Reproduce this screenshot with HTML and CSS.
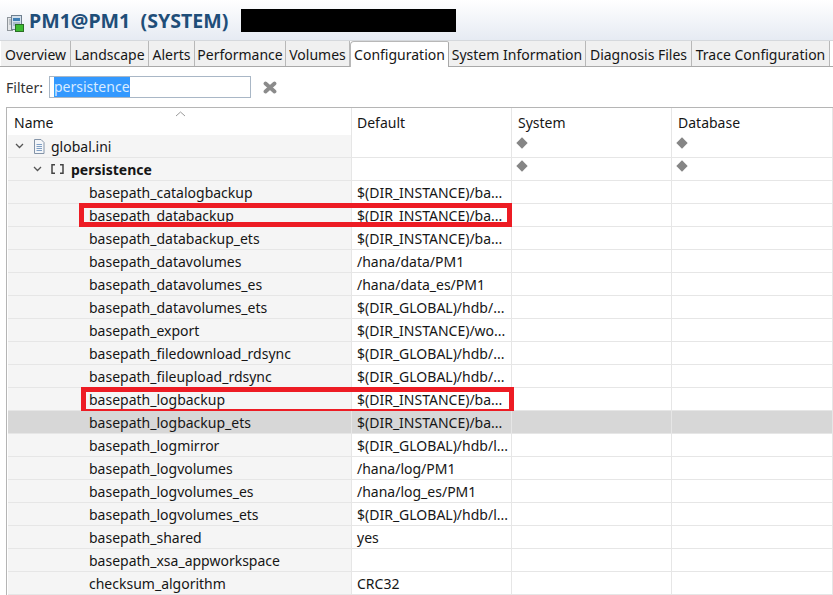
FILE: index.html
```html
<!DOCTYPE html>
<html lang="en">
<head>
<meta charset="utf-8">
<title>PM1@PM1 (SYSTEM)</title>
<link rel="stylesheet" href="styles.css">
</head>
<body>
<header class="title-bar">
  <svg class="sys-icon" width="17" height="17" viewBox="0 0 17 17">
    <rect x="0.500" y="2.500" width="5" height="13" fill="#e4e6e8" stroke="#8f959b"/>
    <path d="M2 5 H4 M2 7 H4 M2 9 H4" stroke="#9aa2aa"/>
    <rect x="4.500" y="0.500" width="10" height="14" fill="#d3e0ec" stroke="#6f7f8f"/>
    <rect x="6" y="3" width="7" height="3" fill="#3f7fb5"/>
    <path d="M6 8 H13 M6 10 H8" stroke="#7f97ad"/>
    <rect x="8.500" y="9.500" width="8" height="7" fill="#3dbb32" stroke="#2a6f25"/>
  </svg>
  <h1 class="title">PM1@PM1&nbsp; (SYSTEM)</h1>
  <div class="redaction"></div>
</header>
<nav class="tabs">
  <div class="tab t1">Overview</div>
  <div class="tab t2">Landscape</div>
  <div class="tab t3">Alerts</div>
  <div class="tab t4">Performance</div>
  <div class="tab t5">Volumes</div>
  <div class="tab active t6">Configuration</div>
  <div class="tab t7">System Information</div>
  <div class="tab t8">Diagnosis Files</div>
  <div class="tab t9">Trace Configuration</div>
</nav>
<div class="filter">
  <span class="filter-label">Filter:</span>
  <div class="filter-input"><span class="selected">persistence</span></div>
  <svg class="clear" width="14" height="13" viewBox="0 0 14 13">
    <path d="M2.500 2.500 L11.500 10.500 M11.500 2.500 L2.500 10.500" stroke="#8b8b8b" stroke-width="3.800" stroke-linecap="round"/>
  </svg>
</div>
<main class="table">
  <div class="row head">
    <div class="cell name">Name<svg class="sort" width="11" height="6" viewBox="0 0 11 6"><path d="M1 5 L5.500 1 L10 5" fill="none" stroke="#9a9a9a"/></svg></div>
    <div class="cell">Default</div>
    <div class="cell wide">System</div>
    <div class="cell wide">Database</div>
  </div>
  <div class="row">
    <div class="cell name lvl0">
      <svg class="chev" width="9" height="6" viewBox="0 0 9 6"><path d="M1 1 L4.500 4.500 L8 1" fill="none" stroke="#555" stroke-width="1.300"/></svg>
      <svg class="file" width="12" height="15" viewBox="0 0 12 15"><path d="M1.500 .5 H8 L11 3.500 V14.500 H1.500 Z" fill="#f4f6f9" stroke="#8494a8"/><path d="M3.500 5.500 H9 M3.500 7.500 H9 M3.500 9.500 H9 M3.500 11.500 H9" stroke="#7f9fc4"/></svg>
      global.ini
    </div>
    <div class="cell"></div>
    <div class="cell"><span class="diamond"></span></div>
    <div class="cell"><span class="diamond"></span></div>
  </div>
  <div class="row">
    <div class="cell name lvl1">
      <svg class="chev" width="9" height="6" viewBox="0 0 9 6"><path d="M1 1 L4.500 4.500 L8 1" fill="none" stroke="#555" stroke-width="1.300"/></svg>
      <svg class="brackets" width="13" height="10" viewBox="0 0 13 10"><path d="M4 .75 H1 V9.250 H4 M9 .75 H12 V9.250 H9" fill="none" stroke="#444" stroke-width="1.500"/></svg>
      <b>persistence</b>
    </div>
    <div class="cell"></div>
    <div class="cell"><span class="diamond"></span></div>
    <div class="cell"><span class="diamond"></span></div>
  </div>
  <div class="row"><div class="cell name lvl2">basepath_catalogbackup</div><div class="cell">$(DIR_INSTANCE)/ba...</div><div class="cell"></div><div class="cell"></div></div>
  <div class="row"><div class="cell name lvl2">basepath_databackup</div><div class="cell">$(DIR_INSTANCE)/ba...</div><div class="cell"></div><div class="cell"></div><div class="mark mark-a"></div></div>
  <div class="row"><div class="cell name lvl2">basepath_databackup_ets</div><div class="cell">$(DIR_INSTANCE)/ba...</div><div class="cell"></div><div class="cell"></div></div>
  <div class="row"><div class="cell name lvl2">basepath_datavolumes</div><div class="cell">/hana/data/PM1</div><div class="cell"></div><div class="cell"></div></div>
  <div class="row"><div class="cell name lvl2">basepath_datavolumes_es</div><div class="cell">/hana/data_es/PM1</div><div class="cell"></div><div class="cell"></div></div>
  <div class="row"><div class="cell name lvl2">basepath_datavolumes_ets</div><div class="cell">$(DIR_GLOBAL)/hdb/...</div><div class="cell"></div><div class="cell"></div></div>
  <div class="row"><div class="cell name lvl2">basepath_export</div><div class="cell">$(DIR_INSTANCE)/wo...</div><div class="cell"></div><div class="cell"></div></div>
  <div class="row"><div class="cell name lvl2">basepath_filedownload_rdsync</div><div class="cell">$(DIR_GLOBAL)/hdb/...</div><div class="cell"></div><div class="cell"></div></div>
  <div class="row"><div class="cell name lvl2">basepath_fileupload_rdsync</div><div class="cell">$(DIR_GLOBAL)/hdb/...</div><div class="cell"></div><div class="cell"></div></div>
  <div class="row"><div class="cell name lvl2">basepath_logbackup</div><div class="cell">$(DIR_INSTANCE)/ba...</div><div class="cell"></div><div class="cell"></div><div class="mark mark-b"></div></div>
  <div class="row selected-row"><div class="cell name lvl2">basepath_logbackup_ets</div><div class="cell">$(DIR_INSTANCE)/ba...</div><div class="cell"></div><div class="cell"></div></div>
  <div class="row"><div class="cell name lvl2">basepath_logmirror</div><div class="cell">$(DIR_GLOBAL)/hdb/l...</div><div class="cell"></div><div class="cell"></div></div>
  <div class="row"><div class="cell name lvl2">basepath_logvolumes</div><div class="cell">/hana/log/PM1</div><div class="cell"></div><div class="cell"></div></div>
  <div class="row"><div class="cell name lvl2">basepath_logvolumes_es</div><div class="cell">/hana/log_es/PM1</div><div class="cell"></div><div class="cell"></div></div>
  <div class="row"><div class="cell name lvl2">basepath_logvolumes_ets</div><div class="cell">$(DIR_GLOBAL)/hdb/l...</div><div class="cell"></div><div class="cell"></div></div>
  <div class="row"><div class="cell name lvl2">basepath_shared</div><div class="cell">yes</div><div class="cell"></div><div class="cell"></div></div>
  <div class="row"><div class="cell name lvl2">basepath_xsa_appworkspace</div><div class="cell"></div><div class="cell"></div><div class="cell"></div></div>
  <div class="row"><div class="cell name lvl2">checksum_algorithm</div><div class="cell">CRC32</div><div class="cell"></div><div class="cell"></div></div>
</main>
</body>
</html>
```
FILE: styles.css
```css
* { box-sizing: border-box; }
html, body { margin: 0; height: 100%; }
body {
  width: 833px;
  height: 595px;
  overflow: hidden;
  background: #fff;
  font-family: "Noto Sans", "Open Sans", sans-serif;
  font-size: 14px;
  color: #161616;
}
.title-bar {
  height: 41px;
  display: flex;
  align-items: center;
  padding: 6px 0 0 7px;
  background: linear-gradient(#ffffff, #e6ebf3);
  border-bottom: 1px solid #d5d8dc;
}
.sys-icon { flex: none; margin-right: 5px; }
.title {
  margin: 0;
  width: 212px;
  margin-top: -5px;
  font-size: 19.6px;
  font-weight: 700;
  color: #1f4e79;
  white-space: nowrap;
}
.redaction { width: 215px; height: 23px; background: #000; margin-top: -5px; }
.tabs {
  height: 26px;
  display: flex;
  padding-left: 1px;
  background: #fff;
  border-bottom: 1px solid #a9a9a9;
}
.tab {
  flex: none;
  text-align: center;
  line-height: 27px;
  background: #f0f0f0;
  border-right: 1px solid #b8b8b8;
  white-space: nowrap;
}
.tab.active {
  background: #fff;
  height: 26px;
  border-top: 1px solid #b8b8b8;
  border-left: 1px solid #b8b8b8;
  border-right: 1px solid #a9a9a9;
  border-top-left-radius: 4px;
  border-top-right-radius: 2px;
  line-height: 26px;
}
.t1 { width: 70px; }
.t2 { width: 78px; }
.t3 { width: 46px; }
.t4 { width: 91px; }
.t5 { width: 64px; }
.t6 { width: 99px; }
.t7 { width: 137px; }
.t8 { width: 106px; }
.t9 { width: 138px; }
.filter {
  height: 40px;
  display: flex;
  align-items: center;
  padding: 0 0 0 6px;
}
.filter-label { width: 43px; color: #333; }
.filter-input {
  width: 202px;
  height: 22px;
  border: 1px solid #a9b7c6;
  padding: 0 0 0 4px;
  line-height: 20px;
}
.selected { display: inline-block; background: #3399ff; color: #d8ebff; height: 20px; }
.clear { margin-left: 12px; }
.table {
  margin-left: 6px;
  padding-left: 1px;
  border-top: 1px solid #b5b5b5;
  border-left: 1px solid #b5b5b5;
}
.row {
  position: relative;
  display: grid;
  grid-template-columns: 344px 160px 160px 161px;
  height: 23px;
  border-bottom: 1px solid #e6e6e6;
}
.head { height: 27px; border-bottom: 0; }
.head .cell { padding-top: 1px; background: #fff; }
.head .wide { padding-left: 6px; }
.cell {
  display: flex;
  align-items: center;
  padding-left: 5px;
  border-right: 1px solid #e6e6e6;
  white-space: nowrap;
  overflow: hidden;
}
.name { position: relative; padding-left: 6px; background: #f5f5f5; }
.selected-row { background: #d7d7d7; }
.selected-row .name { background: #d7d7d7; }
.lvl0 { padding-left: 7px; }
.lvl1 { padding-left: 25px; }
.lvl2 { padding-left: 81px; }
.chev { flex: none; margin-right: 9px; }
.file { flex: none; margin-right: 6px; }
.brackets { flex: none; margin-right: 7px; }
.diamond {
  display: block;
  width: 8px;
  height: 8px;
  margin: -6px 0 0 1px;
  background: #858585;
  transform: rotate(45deg);
}
.sort { position: absolute; left: 167px; top: 3px; }
.mark { position: absolute; border: 5px solid #ed1c24; }
.mark-a { left: 71px; top: -1px; width: 433px; height: 24px; }
.mark-b { left: 73px; top: -1px; width: 433px; height: 27px; }
```
